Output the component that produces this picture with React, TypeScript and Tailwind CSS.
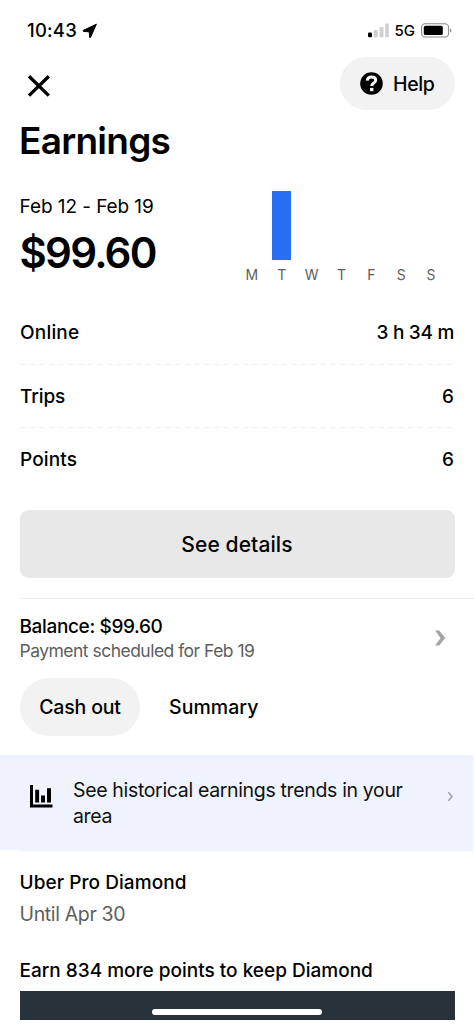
import React from 'react';

const days = [
  { label: 'M', value: 0 },
  { label: 'T', value: 100 },
  { label: 'W', value: 0 },
  { label: 'T', value: 0 },
  { label: 'F', value: 0 },
  { label: 'S', value: 0 },
  { label: 'S', value: 0 },
];

const stats = [
  { label: 'Online', value: '3 h 34 m', labelClass: 'tracking-[0.2px]', valueClass: 'tracking-[-0.3px]' },
  { label: 'Trips', value: '6', labelClass: 'tracking-[-0.1px]', valueClass: '' },
  { label: 'Points', value: '6', labelClass: 'tracking-[0.15px]', valueClass: '' },
];

function StatusBar() {
  return (
    <div className="flex h-[57px] items-center pt-[4px] pr-[22px] pl-[27px]">
      <span className="text-[18.5px] font-medium tracking-[0.2px]">10:43</span>
      <svg className="ml-[5px] h-[16px] w-[16px]" viewBox="0 0 16 16">
        <path d="M14.4 1.2 8.6 14.2Q8 15.300 7.600 14.200L7.200 8.800 1.500 8.400Q.4 8 1.500 7.300Z" fill="#000" stroke="#000" strokeWidth="1" strokeLinejoin="round" />
      </svg>
      <svg className="ml-auto h-[15px] w-[22px]" viewBox="0 0 22 15">
        <rect x="0" y="9.5" width="4" height="4.7" rx="1.2" fill="#000" />
        <rect x="5.8" y="7" width="4" height="7.2" rx="1" fill="#cfcfcf" />
        <rect x="11.5" y="4" width="4" height="10.2" rx="1" fill="#cfcfcf" />
        <rect x="17.2" y="0.5" width="3.6" height="13.7" rx="1" fill="#cfcfcf" />
      </svg>
      <span className="ml-[5px] pt-px text-[15px] font-medium">5G</span>
      <svg className="ml-[6px] h-[15px] w-[31px]" viewBox="0 0 31 15">
        <rect x="0.6" y="0.8" width="27" height="13.2" rx="3.6" fill="none" stroke="#8b8b8b" strokeWidth="1.1" />
        <rect x="2.8" y="2.8" width="19" height="9.3" rx="1.6" fill="#000" />
        <path d="M29 5.6q1.5.5 1.5 1.9t-1.5 1.9z" fill="#8b8b8b" />
      </svg>
    </div>
  );
}

function Header() {
  return (
    <div className="flex h-[53px] items-center justify-between pr-[19px] pl-[27px]">
      <svg className="mt-[5px] h-[24px] w-[24px]" viewBox="0 0 24 24">
        <path d="M2 2.2 21.8 21.6M21.8 2.2 2 21.6" stroke="#000" strokeWidth="3.3" />
      </svg>
      <button className="flex h-[53px] w-[115px] items-center rounded-full bg-[#f2f2f2] pl-[20px]">
        <svg className="h-[23px] w-[23px]" viewBox="0 0 23 23">
          <circle cx="11.5" cy="11.5" r="11.3" fill="#000" />
          <path d="M7.2 8.7C7.5 6.2 9.300 5 11.600 5c2.500 0 4.200 1.300 4.200 3.300 0 2.800-4.100 2.700-4.100 5.700" fill="none" stroke="#fff" strokeWidth="2.9" />
          <rect x="10.1" y="15.900" width="3.3" height="3.3" fill="#fff" />
        </svg>
        <span className="ml-[10px] pt-[2px] text-[19.5px] font-medium tracking-[-0.35px]">Help</span>
      </button>
    </div>
  );
}

function WeekChart() {
  return (
    <div className="flex w-[209px]">
      {days.map((day, i) => (
        <div key={i} className="flex flex-1 flex-col items-center">
          <div className="flex h-[69px] w-[19px] items-end">
            <div className="w-full bg-[#276ef1]" style={{ height: `${day.value}%` }} />
          </div>
          <span className="mt-[5px] text-[14px] leading-[20px] text-[#5e5e5e]">{day.label}</span>
        </div>
      ))}
    </div>
  );
}

function Balance() {
  return (
    <div className="mt-[16px] flex items-center justify-between pr-[28px] pl-[19.5px]">
      <div>
        <p className="text-[19px] leading-[24px] font-medium tracking-[-0.36px]">Balance: $99.60</p>
        <p className="text-[17.5px] leading-[23px] tracking-[-0.52px] text-[#5e5e5e]">Payment scheduled for Feb 19</p>
      </div>
      <svg className="h-[16px] w-[11px]" viewBox="0 0 11 16">
        <path d="M0 .5h4.2L10.2 8l-6 7.5H0L5.6 8Z" fill="#a3a3a3" />
      </svg>
    </div>
  );
}

function TrendsBanner() {
  return (
    <div className="mt-[19px] mr-px">
      <div className="flex h-[95px] bg-[#eef3fe] pl-[30px]">
        <svg className="mt-[30px] h-[23px] w-[23px] shrink-0" viewBox="0 0 23 23">
          <path d="M0 0h3v19.5h19.5v3H0Z" fill="#000" />
          <path d="M5.2 4.8h3.9v12.6H5.2ZM11 10.5h4v6.900h-4ZM17 3.200h4v14.200h-4Z" fill="#000" />
        </svg>
        <p className="mt-[22px] ml-[20px] w-[350px] text-[19.5px] leading-[26px] tracking-[-0.34px] text-[#111]">
          See historical earnings trends in your area
        </p>
        <svg className="mt-[36px] ml-[24px] h-[11px] w-[7px] shrink-0" viewBox="0 0 7 11">
          <path d="M1.400 1.200 5 5.500 1.400 9.800" fill="none" stroke="#9aa0ab" strokeWidth="1.400" />
        </svg>
      </div>
      <div className="ml-[20px] h-px bg-[#eef3fe]" />
    </div>
  );
}

export default function App() {
  return (
    <div className="flex h-[1025px] w-[474px] flex-col overflow-hidden bg-white font-['Inter',sans-serif] text-black">
      <StatusBar />
      <Header />
      <h1 className="mt-[10px] pl-[19px] text-[37px] leading-[42px] font-semibold tracking-[-0.75px]">Earnings</h1>

      <div className="mt-[29px] flex h-[94px] justify-between pr-[28px] pl-[19.5px]">
        <div className="pt-[2px]">
          <p className="text-[19px] leading-[27px] tracking-[-0.07px]">Feb 12 - Feb 19</p>
          <p className="mt-[9px] text-[42px] leading-[48px] font-semibold tracking-[-1.75px]">$99.60</p>
        </div>
        <WeekChart />
      </div>

      <div className="mt-[16px] px-[20px]">
        {stats.map((stat, i) => (
          <div key={stat.label}>
            {i > 0 && (
              <svg className="block h-px w-full" preserveAspectRatio="none">
                <line x1="0" y1="0.5" x2="435" y2="0.5" stroke="#f0f0f0" strokeDasharray="5 4.7" />
              </svg>
            )}
            <div className="flex h-[62.5px] items-center justify-between pt-[2px] text-[19px] font-medium">
              <span className={stat.labelClass}>{stat.label}</span>
              <span className={stat.valueClass}>{stat.value}</span>
            </div>
          </div>
        ))}
      </div>

      <button className="mx-[19.5px] mt-[19px] h-[68px] shrink-0 rounded-[9px] bg-[#e8e8e8] pt-[2px] text-[21px] font-medium tracking-[0.1px]">
        See details
      </button>

      <div className="mt-[20px] ml-[20px] h-px shrink-0 bg-[#f0f0f0]" />

      <Balance />

      <div className="mt-[16px] flex h-[58px] shrink-0 items-center pl-[20px] text-[19.5px] font-medium">
        <button className="h-[58px] w-[120px] rounded-full bg-[#f2f2f2] pt-[2px] tracking-[-0.17px]">Cash out</button>
        <button className="ml-[29px] pt-[2px] tracking-[0.05px]">Summary</button>
      </div>

      <TrendsBanner />

      <div className="pt-[18px] pl-[19.5px]">
        <p className="text-[19px] leading-[28px] font-medium tracking-[0.07px]">Uber Pro Diamond</p>
        <p className="mt-[4px] text-[19.5px] leading-[27px] tracking-[-0.35px] text-[#5e5e5e]">Until Apr 30</p>
        <p className="mt-[29px] text-[19px] leading-[28px] font-medium">Earn 834 more points to keep Diamond</p>
      </div>

      <div className="mx-[19.5px] mt-[6px] flex h-[29.5px] shrink-0 justify-center bg-[#27323b] pt-[18px]">
        <div className="h-[6.5px] w-[170px] rounded-full bg-white" />
      </div>
    </div>
  );
}
